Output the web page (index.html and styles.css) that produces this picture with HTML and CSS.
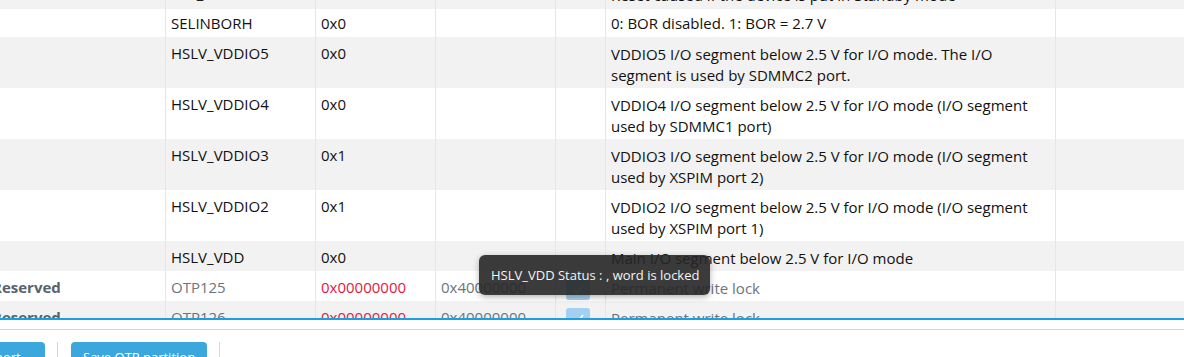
FILE: index.html
```html
<!DOCTYPE html>
<html lang="en">
<head>
    <meta charset="UTF-8">
    <title>OTP partition</title>
    <link rel="stylesheet" href="styles.css">
</head>
<body>
    <div class="grid-viewport">
        <div class="grid">
            <div class="row alt lead">
                <div class="cell"></div>
                <div class="cell name">RST_STDBY</div>
                <div class="cell">0x0</div>
                <div class="cell"></div>
                <div class="cell"></div>
                <div class="cell desc">Reset caused if the device is put in Standby mode</div>
                <div class="cell"></div>
            </div>
            <div class="row compact">
                <div class="cell"></div>
                <div class="cell name">SELINBORH</div>
                <div class="cell">0x0</div>
                <div class="cell"></div>
                <div class="cell"></div>
                <div class="cell desc">0: BOR disabled. 1: BOR = 2.7 V</div>
                <div class="cell"></div>
            </div>
            <div class="row alt two-line">
                <div class="cell"></div>
                <div class="cell name">HSLV_VDDIO5</div>
                <div class="cell">0x0</div>
                <div class="cell"></div>
                <div class="cell"></div>
                <div class="cell desc">VDDIO5 I/O segment below 2.5 V for I/O mode. The I/O<br>segment is used by SDMMC2 port.</div>
                <div class="cell"></div>
            </div>
            <div class="row two-line">
                <div class="cell"></div>
                <div class="cell name">HSLV_VDDIO4</div>
                <div class="cell">0x0</div>
                <div class="cell"></div>
                <div class="cell"></div>
                <div class="cell desc">VDDIO4 I/O segment below 2.5 V for I/O mode (I/O segment<br>used by SDMMC1 port)</div>
                <div class="cell"></div>
            </div>
            <div class="row alt two-line">
                <div class="cell"></div>
                <div class="cell name">HSLV_VDDIO3</div>
                <div class="cell">0x1</div>
                <div class="cell"></div>
                <div class="cell"></div>
                <div class="cell desc">VDDIO3 I/O segment below 2.5 V for I/O mode (I/O segment<br>used by XSPIM port 2)</div>
                <div class="cell"></div>
            </div>
            <div class="row two-line">
                <div class="cell"></div>
                <div class="cell name">HSLV_VDDIO2</div>
                <div class="cell">0x1</div>
                <div class="cell"></div>
                <div class="cell"></div>
                <div class="cell desc">VDDIO2 I/O segment below 2.5 V for I/O mode (I/O segment<br>used by XSPIM port 1)</div>
                <div class="cell"></div>
            </div>
            <div class="row alt">
                <div class="cell"></div>
                <div class="cell name">HSLV_VDD</div>
                <div class="cell">0x0</div>
                <div class="cell"></div>
                <div class="cell"></div>
                <div class="cell desc">Main I/O segment below 2.5 V for I/O mode</div>
                <div class="cell"></div>
            </div>
            <div class="row word">
                <div class="cell group">Reserved</div>
                <div class="cell">OTP125</div>
                <div class="cell value">0x00000000</div>
                <div class="cell">0x40000000</div>
                <div class="cell check-cell"><span class="check"><svg viewBox="0 0 24 22" width="24" height="22"><polyline points="7,11 11,15 17,7" /></svg></span></div>
                <div class="cell desc">Permanent write lock</div>
                <div class="cell"></div>
            </div>
            <div class="row alt word">
                <div class="cell group">Reserved</div>
                <div class="cell">OTP126</div>
                <div class="cell value">0x00000000</div>
                <div class="cell">0x40000000</div>
                <div class="cell check-cell"><span class="check"><svg viewBox="0 0 24 22" width="24" height="22"><polyline points="7,11 11,15 17,7" /></svg></span></div>
                <div class="cell desc">Permanent write lock</div>
                <div class="cell"></div>
            </div>
        </div>
    </div>

    <div class="footer">
        <div class="toolbar">
            <button class="btn first">Import</button>
            <span class="sep"></span>
            <button class="btn">Save OTP partition</button>
            <span class="sep"></span>
        </div>
    </div>

    <div class="tooltip">HSLV_VDD Status : , word is locked</div>
</body>
</html>
```

FILE: styles.css
```css
html, body {
    margin: 0;
    padding: 0;
    background-color: #ffffff;
    font-family: "Open Sans", "Noto Sans", sans-serif;
    overflow: hidden;
}
/* Scrolled grid: top row and first column are cut off */
.grid-viewport {
    height: 318px;
    overflow: hidden;
    border-bottom: 2px solid #19a0dd;
}
.grid {
    margin-top: -20px;
    margin-left: -13px;
}
.row {
    display: grid;
    grid-template-columns: 179px 150px 120px 120px 50px 450px 130px;
    height: 30px;
    background-color: #ffffff;
    font-size: 15px;
    line-height: 20px;
    color: #111111;
}
.row.alt {
    background-color: #f2f2f2;
}
.row.lead {
    height: 29px;
}
.row.compact {
    height: 28px;
}
.row.two-line {
    height: 51px;
}
.cell {
    box-sizing: border-box;
    border-right: 1px solid #e6e6e6;
    padding: 6px 5px 0 5px;
    white-space: nowrap;
    overflow: hidden;
}
.row.compact .cell {
    padding-top: 4px;
}
.cell.desc {
    padding-top: 7px;
    line-height: 21px;
}
.row.lead .cell {
    padding-top: 3px;
}
.row.lead .cell.desc {
    padding-top: 5px;
}
.row.word {
    color: #6b747d;
}
.cell.group {
    font-weight: bold;
    color: #58626c;
}
.cell.value {
    color: #e4173f;
}
.check-cell {
    padding: 7px 0 0 10px;
}
.check {
    display: block;
    width: 24px;
    height: 22px;
    border-radius: 3px;
    background-color: #a3d0f2;
}
.check svg {
    display: block;
    fill: none;
    stroke: #ffffff;
    stroke-width: 1.6;
}
.footer {
    margin-top: 9px;
    border-top: 1px solid #d3d3d3;
}
.toolbar {
    display: flex;
    align-items: flex-start;
    padding-top: 12px;
    margin-left: -45px;
}
.btn {
    height: 30px;
    padding: 0 12px;
    border: none;
    border-radius: 4px;
    background-color: #3ba7dd;
    color: #ffffff;
    font-family: "Open Sans", "Noto Sans", sans-serif;
    font-size: 13px;
    line-height: 30px;
}
.btn.first {
    width: 90px;
}
.sep {
    width: 1px;
    height: 30px;
    margin: 0 13px 0 12px;
    background-color: #d6d6d6;
}
.tooltip {
    position: absolute;
    left: 479px;
    top: 255px;
    width: 231px;
    height: 40px;
    box-sizing: border-box;
    padding: 0 12px;
    border-radius: 6px;
    background-color: rgba(38, 38, 38, 0.9);
    box-shadow: 0 2px 6px rgba(0, 0, 0, 0.3);
    color: #f4f4f4;
    font-size: 13px;
    line-height: 40px;
    white-space: nowrap;
}
```
